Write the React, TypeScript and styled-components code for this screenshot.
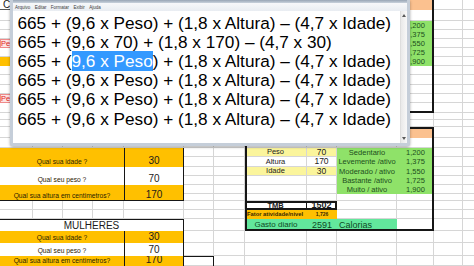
import React from "react";
import styled, { createGlobalStyle } from "styled-components";

const COLS = [33, 30, 30, 31, 60, 30, 31, 62, 30, 60, 37, 29, 40];
const ROWS = [10, 11, 9, 9, 9, 9, 9, 9, 10, 9, 9, 10, 7, 7, 11, 10, 9, 10, 9, 9, 9, 7, 9, 9, 12, 12, 13, 10];

const ORANGE = "#ffc000";
const YELLOW = "#fbf59c";
const GREEN = "#8fe269";
const MINT = "#62e79c";
const PEACH = "#fbc18f";
const GRID = "#d6d6d6";
const INK = "#1b1b1b";
const LEAF = "#1d4f1d";
const LINE = "#161616";

const Global = createGlobalStyle`
  html, body { margin: 0; padding: 0; background: #fff; }
  body { font-family: "Liberation Sans", Arial, sans-serif; }
`;

const Screen = styled.div`
  position: relative;
  width: 474px;
  height: 266px;
  overflow: hidden;
  background: #fff;
`;

const Sheet = styled.div`
  display: grid;
  grid-template-columns: ${COLS.map((w) => `${w}px`).join(" ")};
  grid-template-rows: ${ROWS.map((h) => `${h}px`).join(" ")};
  font-family: "Liberation Sans", Arial, sans-serif;
  color: ${INK};
`;

type Place = { $r: string | number; $c: string | number };

const GridBox = styled.div<Place>`
  grid-row: ${(p) => p.$r};
  grid-column: ${(p) => p.$c};
  border-right: 1px solid ${GRID};
  border-bottom: 1px solid ${GRID};
`;

const Cell = styled.div<Place>`
  grid-row: ${(p) => p.$r};
  grid-column: ${(p) => p.$c};
  display: flex;
  align-items: center;
  justify-content: center;
  min-width: 0;
  overflow: hidden;
  white-space: nowrap;
  line-height: 1;
  box-sizing: border-box;
`;

const SheetTitle = styled(Cell)`
  justify-content: flex-start;
  padding-left: 3px;
  font-size: 10px;
  border-bottom: 1px solid #555;
`;

const RedTag = styled(Cell)`
  justify-content: flex-start;
  background: #fde3e3;
  color: #e01e1e;
  font-size: 7.5px;
  border: 1px solid #f08a8a;
`;

const Band = styled(Cell)`
  background: ${ORANGE};
`;

const Header = styled(Cell)`
  background: ${PEACH};
`;

const SIDES: Record<string, string> = { t: "top", r: "right", b: "bottom", l: "left" };

const Frame = styled(Cell)<{ $w?: number; $sides: string }>`
  pointer-events: none;
  ${(p) =>
    p.$sides
      .split("")
      .map((s) => `border-${SIDES[s]}: ${p.$w ?? 2}px solid ${LINE};`)
      .join("\n")}
`;

const Question = styled(Cell)<{ $fill?: boolean }>`
  align-items: flex-end;
  padding-bottom: 1.5px;
  background: ${(p) => (p.$fill ? ORANGE : "#fff")};
  font-size: 6.7px;
  color: #2a2200;
`;

const Answer = styled(Cell)<{ $fill?: boolean }>`
  align-items: flex-end;
  padding-bottom: 1px;
  background: ${(p) => (p.$fill ? ORANGE : "#fff")};
  font-size: 10px;
  border-left: 1px solid ${LINE};
  border-right: 1px solid ${LINE};
`;

const SectionTitle = styled(Cell)`
  font-size: 10px;
  background: #fff;
  border-top: 1px solid ${LINE};
  border-right: 1px solid ${LINE};
`;

const Corner = styled(Cell)`
  border-top: 1px solid ${LINE};
  border-right: 1px solid ${LINE};
`;

const InputCell = styled(Cell)<{ $fill?: boolean; $num?: boolean }>`
  background: ${(p) => (p.$fill ? YELLOW : "#fff")};
  font-size: ${(p) => (p.$num ? 8.5 : 7.5)}px;
  border-right: 1px solid ${GRID};
  border-bottom: 1px solid ${GRID};
`;

const Level = styled(Cell)`
  background: ${GREEN};
  color: ${LEAF};
  font-size: 7.5px;
`;

const Tmb = styled(Cell)<{ $big?: boolean }>`
  background: #fff;
  font-weight: bold;
  font-size: ${(p) => (p.$big ? 9 : 7.5)}px;
  border-right: 1px solid ${LINE};
`;

const Factor = styled(Cell)<{ $small?: boolean }>`
  background: ${ORANGE};
  font-weight: bold;
  color: #3a2a00;
  font-size: ${(p) => (p.$small ? 5 : 5.8)}px;
  justify-content: ${(p) => (p.$small ? "center" : "flex-start")};
  padding-left: ${(p) => (p.$small ? 0 : 2)}px;
`;

const Spend = styled(Cell)<{ $big?: boolean; $left?: boolean }>`
  background: ${MINT};
  color: #0e4a25;
  font-size: ${(p) => (p.$big ? 9 : 8)}px;
  justify-content: ${(p) => (p.$left ? "flex-start" : "center")};
  padding-left: ${(p) => (p.$left ? 2 : 0)}px;
`;

/* ---------- Notepad window ---------- */

const Notepad = styled.div`
  position: absolute;
  left: 10px;
  top: 0;
  width: 400px;
  height: 146px;
  box-sizing: border-box;
  display: flex;
  flex-direction: column;
  background: #c5ced9;
  border: 3px solid #c5ced9;
  border-top: 0;
  border-radius: 0 0 3px 3px;
  box-shadow: 0 1px 3px rgba(0, 0, 0, 0.35);
`;

const TitleEdge = styled.div`
  height: 3px;
  flex: none;
  background: linear-gradient(#98a5b5, #c9d2dc);
`;

const MenuBar = styled.div`
  height: 8px;
  flex: none;
  display: flex;
  align-items: center;
  gap: 4.4px;
  padding-left: 2px;
  background: linear-gradient(#f7f8fa, #e9edf2);
  font-family: "Liberation Sans", Arial, sans-serif;
  font-size: 4.5px;
  color: #3b3b3b;
`;

const Body = styled.div`
  flex: 1;
  display: flex;
  min-height: 0;
`;

const Editor = styled.div`
  flex: 1;
  background: #fff;
  padding: 2.6px 0 0 4.5px;
  font-family: "Liberation Sans", Arial, sans-serif;
  font-size: 17.2px;
  line-height: 19.2px;
  color: #000;
  white-space: pre;
  overflow: hidden;
`;

const Line = styled.div``;

const Selected = styled.span`
  background: #3399ff;
  color: #fff;
`;

const ScrollBar = styled.div`
  width: 7px;
  flex: none;
  box-sizing: border-box;
  display: flex;
  flex-direction: column;
  justify-content: space-between;
  align-items: center;
  padding: 3px 0 3px;
  background: linear-gradient(90deg, #e9e9e9, #f8f8f8);
  border-left: 1px solid #dedede;
`;

const Arrow = ({ down }: { down?: boolean }) => (
  <svg width="4" height="3" viewBox="0 0 4 3">
    <polygon points={down ? "0,0 4,0 2,3" : "0,3 4,3 2,0"} fill="#5a5a5a" />
  </svg>
);

const FORMULA = "665 + (9,6 x Peso) + (1,8 x Altura) – (4,7 x Idade)";

export default function App() {
  const base: React.ReactNode[] = [];
  ROWS.forEach((_, ri) =>
    COLS.forEach((__, ci) => base.push(<GridBox key={`g${ri}-${ci}`} $r={ri + 1} $c={ci + 1} />))
  );

  const levels = [
    ["Sedentario", "1,200"],
    ["Levemente /ativo", "1,375"],
    ["Moderado / ativo", "1,550"],
    ["Bastante /ativo", "1,725"],
    ["Muito / ativo", "1,900"],
  ];
  const inputs = [
    ["Peso", "70", true],
    ["Altura", "170", false],
    ["Idade", "30", true],
  ] as const;

  return (
    <Screen>
      <Global />
      <Sheet>
        {base}

        <SheetTitle $r={1} $c="1 / 8">CA</SheetTitle>
        <RedTag $r={5} $c="1 / 3">Peso</RedTag>
        <Band $r={7} $c="1 / 5" />
        <RedTag $r={11} $c="1 / 3">Peso</RedTag>

        {/* upper table (mostly hidden) */}
        <Header $r={1} $c={11} />
        {levels.map(([, v], i) => (
          <Level key={`u${i}`} $r={3 + i} $c={11}>
            {v}
          </Level>
        ))}

        {/* lower table */}
        <Header $r={15} $c={11} />
        {inputs.map(([l, v, f], i) => (
          <React.Fragment key={`i${i}`}>
            <InputCell $r={17 + i} $c={8} $fill={f}>
              {l}
            </InputCell>
            <InputCell $r={17 + i} $c={9} $fill={f} $num>
              {v}
            </InputCell>
          </React.Fragment>
        ))}
        {levels.map(([l, v], i) => (
          <React.Fragment key={`l${i}`}>
            <Level $r={17 + i} $c={10}>
              {l}
            </Level>
            <Level $r={17 + i} $c={11}>
              {v}
            </Level>
          </React.Fragment>
        ))}
        <Tmb $r={23} $c={8}>TMB</Tmb>
        <Tmb $r={23} $c={9} $big>
          1502
        </Tmb>
        <Factor $r={24} $c={8}>Fator atividade/nivel</Factor>
        <Factor $r={24} $c={9} $small>
          1,726
        </Factor>
        <Spend $r={25} $c={8}>Gasto diario</Spend>
        <Spend $r={25} $c={9} $big>
          2591
        </Spend>
        <Spend $r={25} $c={10} $big $left>
          Calorias
        </Spend>

        {/* left questionnaire */}
        <Question $r="17 / 19" $c="1 / 5" $fill>
          Qual sua idade ?
        </Question>
        <Answer $r="17 / 19" $c={5} $fill>
          30
        </Answer>
        <Question $r="19 / 21" $c="1 / 5">
          Qual seu peso ?
        </Question>
        <Answer $r="19 / 21" $c={5}>
          70
        </Answer>
        <Question $r="21 / 23" $c="1 / 5" $fill>
          Qual sua altura em centimetros?
        </Question>
        <Answer $r="21 / 23" $c={5} $fill>
          170
        </Answer>

        <SectionTitle $r={25} $c="1 / 6">MULHERES</SectionTitle>
        <Question $r={26} $c="1 / 5" $fill>
          Qual sua idade ?
        </Question>
        <Answer $r={26} $c={5} $fill>
          30
        </Answer>
        <Question $r={27} $c="1 / 5">
          Qual seu peso ?
        </Question>
        <Answer $r={27} $c={5}>
          70
        </Answer>
        <Question $r={28} $c="1 / 5" $fill>
          Qual sua altura em centimetros?
        </Question>
        <Answer $r={28} $c={5} $fill>
          170
        </Answer>
        <Corner $r={28} $c={6} />

        {/* borders */}
        <Frame $r="1 / 13" $c="8 / 12" $sides="rb" />
        <Frame $r="15 / 26" $c="8 / 12" $sides="trbl" />
        <Frame $r={23} $c="8 / 10" $sides="trbl" />
        <Frame $r="17 / 23" $c="1 / 6" $sides="b" $w={1} />
      </Sheet>

      <Notepad>
        <TitleEdge />
        <MenuBar>
          <span>Arquivo</span>
          <span>Editar</span>
          <span>Formatar</span>
          <span>Exibir</span>
          <span>Ajuda</span>
        </MenuBar>
        <Body>
          <Editor>
            <Line>{FORMULA}</Line>
            <Line>665 + (9,6 x 70) + (1,8 x 170) – (4,7 x 30)</Line>
            <Line>
              665 + (<Selected>9,6 x Peso</Selected>) + (1,8 x Altura) – (4,7 x Idade)
            </Line>
            <Line>{FORMULA}</Line>
            <Line>{FORMULA}</Line>
            <Line>{FORMULA}</Line>
          </Editor>
          <ScrollBar>
            <Arrow />
            <Arrow down />
          </ScrollBar>
        </Body>
      </Notepad>
    </Screen>
  );
}
